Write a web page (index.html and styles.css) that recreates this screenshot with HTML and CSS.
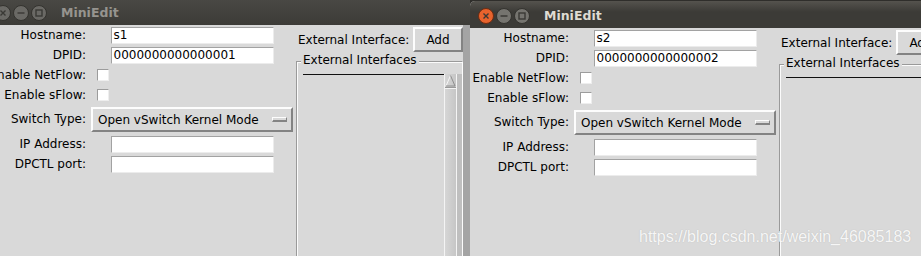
FILE: index.html
```html
<!DOCTYPE html>
<html lang="en">

<head>
  <meta charset="UTF-8" />
  <title>MiniEdit</title>
  <link rel="stylesheet" href="styles.css">
</head>

<body>
  <!-- back window (unfocused, s1) -->
  <div class="window win-back">
    <div class="titlebar">
      <span class="wm-btn">
        <svg width="16" height="16" viewBox="0 0 16 16"><circle cx="8" cy="8" r="7.5" class="knob"/><path d="M5.5 5.5L10.5 10.5M10.5 5.5L5.5 10.5" class="glyph"/></svg>
      </span>
      <span class="wm-btn">
        <svg width="16" height="16" viewBox="0 0 16 16"><circle cx="8" cy="8" r="7.5" class="knob"/><path d="M4.5 8H11.5" class="glyph"/></svg>
      </span>
      <span class="wm-btn">
        <svg width="16" height="16" viewBox="0 0 16 16"><circle cx="8" cy="8" r="7.5" class="knob"/><rect x="5" y="5" width="6" height="6" class="glyph"/></svg>
      </span>
      <span class="title">MiniEdit</span>
    </div>
    <div class="dialog">
      <div class="form">
        <span class="lbl">Hostname:</span>
        <div class="entry">s1</div>
        <span class="lbl">DPID:</span>
        <div class="entry">0000000000000001</div>
        <span class="lbl">Enable NetFlow:</span>
        <div class="check"></div>
        <span class="lbl">Enable sFlow:</span>
        <div class="check"></div>
        <span class="lbl">Switch Type:</span>
        <div class="menubtn">Open vSwitch Kernel Mode<span class="indicator"></span></div>
        <span class="lbl">IP Address:</span>
        <div class="entry"></div>
        <span class="lbl">DPCTL port:</span>
        <div class="entry"></div>
      </div>
      <div class="ext">
        <div class="ext-row">
          <span class="ext-lbl">External Interface:</span>
          <div class="tk-btn">Add</div>
        </div>
        <div class="lframe">
          <span class="lframe-title">External Interfaces</span>
          <div class="listbox"></div>
          <div class="scrollbar">
            <div class="slider">
              <div class="arrow">
                <svg width="11" height="13" viewBox="0 0 11 13"><path d="M1 12L5.5 1.5" stroke="#f6f6f6"/><path d="M5.5 1.5L10 12H1" stroke="#8e8e8e" fill="none"/></svg>
              </div>
            </div>
          </div>
        </div>
      </div>
    </div>
  </div>

  <!-- front window (focused, s2) -->
  <div class="window win-front">
    <div class="titlebar">
      <span class="wm-btn">
        <svg width="16" height="16" viewBox="0 0 16 16"><circle cx="8" cy="8" r="7.5" class="knob close"/><path d="M5.5 5.5L10.5 10.5M10.5 5.5L5.5 10.5" class="glyph"/></svg>
      </span>
      <span class="wm-btn">
        <svg width="16" height="16" viewBox="0 0 16 16"><circle cx="8" cy="8" r="7.5" class="knob"/><path d="M4.5 8H11.5" class="glyph"/></svg>
      </span>
      <span class="wm-btn">
        <svg width="16" height="16" viewBox="0 0 16 16"><circle cx="8" cy="8" r="7.5" class="knob"/><rect x="5" y="5" width="6" height="6" class="glyph"/></svg>
      </span>
      <span class="title">MiniEdit</span>
    </div>
    <div class="dialog">
      <div class="form">
        <span class="lbl">Hostname:</span>
        <div class="entry">s2</div>
        <span class="lbl">DPID:</span>
        <div class="entry">0000000000000002</div>
        <span class="lbl">Enable NetFlow:</span>
        <div class="check"></div>
        <span class="lbl">Enable sFlow:</span>
        <div class="check"></div>
        <span class="lbl">Switch Type:</span>
        <div class="menubtn">Open vSwitch Kernel Mode<span class="indicator"></span></div>
        <span class="lbl">IP Address:</span>
        <div class="entry"></div>
        <span class="lbl">DPCTL port:</span>
        <div class="entry"></div>
      </div>
      <div class="ext">
        <div class="ext-row">
          <span class="ext-lbl">External Interface:</span>
          <div class="tk-btn">Add</div>
        </div>
        <div class="lframe">
          <span class="lframe-title">External Interfaces</span>
          <div class="listbox"></div>
          <div class="scrollbar">
            <div class="slider"></div>
          </div>
        </div>
      </div>
    </div>
  </div>

  <div class="watermark">https://blog.csdn.net/weixin_46085183</div>
</body>

</html>
```

FILE: styles.css
```css
body {
  margin: 0;
  width: 921px;
  height: 256px;
  overflow: hidden;
  position: relative;
  background: #2f2e2b;
  font-family: "DejaVu Sans", sans-serif;
  font-size: 12px;
  color: #000;
}

.window {
  position: absolute;
  width: 483px;
  height: 270px;
  display: flex;
  flex-direction: column;
  background: #d9d9d9;
}

.win-back {
  left: -13px;
  top: -2px;
}

.win-front {
  left: 470px;
  top: 1px;
  border-radius: 5px 5px 0 0;
  overflow: hidden;
}

/* title bar */
.titlebar {
  height: 27px;
  flex: none;
  box-sizing: border-box;
  padding: 2px 0 0 8px;
  display: flex;
  align-items: center;
  background: linear-gradient(#4a4945, #3c3b37);
}

.win-front .titlebar {
  background: linear-gradient(#55534e, #3c3b37 40%);
}

.wm-btn {
  width: 16px;
  height: 16px;
  margin-right: 2px;
  display: flex;
}

.knob {
  fill: #75746f;
  stroke: #34332f;
  stroke-width: 1;
}

.win-back .knob {
  fill: #6a6965;
}

.knob.close {
  fill: #e8632d;
  stroke: #6e2c12;
}

.glyph {
  fill: none;
  stroke: #3a3935;
  stroke-width: 1.4;
}

.title {
  margin-left: 12px;
  font-weight: bold;
  font-size: 12.5px;
  color: #dfdbd2;
}

.win-back .title {
  color: #96948f;
}

/* dialog body */
.dialog {
  flex: 1;
  display: flex;
  align-items: flex-start;
}

.win-back .dialog {
  border-right: 7px solid #a4a4a4;
}

.form {
  display: grid;
  grid-template-columns: 99px 202px;
  grid-template-rows: 20px 20px 20px 20px 29px 20px 20px;
  column-gap: 5px;
  align-items: center;
}

.lbl {
  text-align: right;
  white-space: nowrap;
  line-height: 15px;
}

.entry {
  justify-self: center;
  width: 163px;
  height: 17px;
  box-sizing: border-box;
  padding-left: 2px;
  background: #fff;
  border: 1px solid;
  border-color: #a2a2a2 #ececec #ececec #a2a2a2;
  line-height: 14px;
  white-space: nowrap;
}

.check {
  justify-self: start;
  margin-left: 6px;
  width: 12px;
  height: 12px;
  box-sizing: border-box;
  background: #fff;
  border: 1px solid;
  border-color: #9c9c9c #eeeeee #eeeeee #9c9c9c;
}

.menubtn {
  height: 25px;
  box-sizing: border-box;
  padding-left: 5px;
  display: flex;
  align-items: center;
  justify-content: space-between;
  border: 2px solid;
  border-color: #fdfdfd #838383 #838383 #fdfdfd;
  white-space: nowrap;
}

.indicator {
  width: 15px;
  height: 5px;
  margin-right: 4px;
  box-sizing: border-box;
  border: 1px solid;
  border-color: #fdfdfd #838383 #838383 #fdfdfd;
  border-bottom-width: 2px;
}

/* external interfaces column */
.ext {
  margin-left: 3px;
  width: 167px;
  flex: none;
  align-self: stretch;
  display: flex;
  flex-direction: column;
}

.ext-row {
  padding-top: 2px;
  display: flex;
  align-items: center;
}

.ext-lbl {
  flex: 1;
  padding-left: 2px;
  white-space: nowrap;
}

.tk-btn {
  width: 50px;
  height: 25px;
  box-sizing: border-box;
  display: flex;
  align-items: center;
  justify-content: center;
  border: 2px solid;
  border-color: #fdfdfd #838383 #838383 #fdfdfd;
}

.lframe {
  position: relative;
  margin-top: 9px;
  flex: 1;
  display: flex;
  padding: 12px 0 0 6px;
  border-top: 1px solid #9a9a9a;
  border-left: 1px solid #9a9a9a;
  border-right: 1px solid #fbfbfb;
  box-shadow: inset 1px 1px 0 #fbfbfb;
}

.lframe-title {
  position: absolute;
  top: -9px;
  left: 4px;
  padding: 0 2px;
  background: #d9d9d9;
  line-height: 15px;
  white-space: nowrap;
}

.listbox {
  width: 141px;
  flex: none;
  border-top: 1px solid #111;
}

.scrollbar {
  width: 18px;
  flex: none;
  background: #bfbfbf;
}

.slider {
  width: 13px;
  height: 100%;
  box-sizing: border-box;
  border-left: 1px solid #f4f4f4;
  border-right: 1px solid #f4f4f4;
  background: linear-gradient(to right, #d6d6d6, #c6c6c6);
}

.arrow {
  height: 13px;
  border-bottom: 1px solid #9a9a9a;
  box-shadow: 0 1px 0 #f4f4f4;
  display: flex;
  justify-content: center;
}

.watermark {
  position: absolute;
  left: 639px;
  top: 228px;
  font-family: "Liberation Sans", Arial, sans-serif;
  font-size: 16px;
  color: rgba(255, 255, 255, 0.88);
  text-shadow: 0 0 1px rgba(120, 120, 120, 0.35);
  white-space: nowrap;
}
```
